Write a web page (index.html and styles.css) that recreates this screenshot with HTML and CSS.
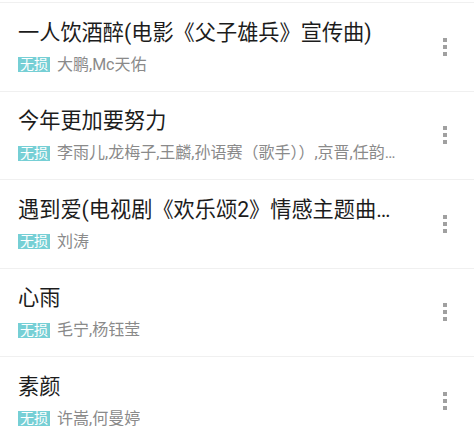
FILE: index.html
```html
<!DOCTYPE html>
<html lang="zh-CN">
<head>
    <meta charset="UTF-8">
    <meta name="viewport" content="width=device-width, initial-scale=1.0">
    <title>歌曲列表</title>
    <link rel="stylesheet" href="styles.css">
</head>
<body>

    <ul class="song-list">
        <li class="song">
            <div class="song-info">
                <div class="song-title">一人饮酒醉(电影《父子雄兵》宣传曲)</div>
                <div class="song-meta"><span class="tag">无损</span><span class="artist">大鹏,Mc天佑</span></div>
            </div>
            <div class="more"><i></i><i></i><i></i></div>
        </li>
        <li class="song">
            <div class="song-info">
                <div class="song-title">今年更加要努力</div>
                <div class="song-meta"><span class="tag">无损</span><span class="artist">李雨儿,龙梅子,王麟,孙语赛（歌手））,京晋,任韵…</span></div>
            </div>
            <div class="more"><i></i><i></i><i></i></div>
        </li>
        <li class="song">
            <div class="song-info">
                <div class="song-title">遇到爱(电视剧《欢乐颂2》情感主题曲…</div>
                <div class="song-meta"><span class="tag">无损</span><span class="artist">刘涛</span></div>
            </div>
            <div class="more"><i></i><i></i><i></i></div>
        </li>
        <li class="song">
            <div class="song-info">
                <div class="song-title">心雨</div>
                <div class="song-meta"><span class="tag">无损</span><span class="artist">毛宁,杨钰莹</span></div>
            </div>
            <div class="more"><i></i><i></i><i></i></div>
        </li>
        <li class="song">
            <div class="song-info">
                <div class="song-title">素颜</div>
                <div class="song-meta"><span class="tag">无损</span><span class="artist">许嵩,何曼婷</span></div>
            </div>
            <div class="more"><i></i><i></i><i></i></div>
        </li>
    </ul>

</body>
</html>
```

FILE: styles.css
```css
body {
    font-family: Roboto, "Noto Sans CJK SC", sans-serif;
    background-color: #fff;
    margin: 0;
    padding: 0;
}
.song-list {
    list-style: none;
    margin: 2px 0 0;
    padding: 0;
    border-top: 1px solid #f0f0f0;
}
.song {
    display: flex;
    align-items: center;
    height: 87.5px;
    padding: 0 27px 0 18px;
    border-bottom: 1px solid #f0f0f0;
}
.song-info {
    flex: 1;
    min-width: 0;
}
.song-title {
    font-size: 21.2px;
    line-height: 27px;
    color: #1c1c1c;
    white-space: nowrap;
    overflow: hidden;
    text-overflow: ellipsis;
}
.song-meta {
    display: flex;
    align-items: center;
    margin-top: 9px;
    white-space: nowrap;
    overflow: hidden;
}
.tag {
    background-color: #76cfd5;
    color: white;
    font-size: 14px;
    line-height: 15px;
    padding: 0 2px;
    margin-right: 7px;
}
.artist {
    font-size: 16px;
    line-height: 20px;
    color: #8a8a8a;
    overflow: hidden;
    text-overflow: ellipsis;
}
.more {
    display: flex;
    flex-direction: column;
    gap: 3px;
    margin-left: 43px;
}
.more i {
    display: block;
    width: 4px;
    height: 4px;
    background-color: #a0a0a0;
}
```
